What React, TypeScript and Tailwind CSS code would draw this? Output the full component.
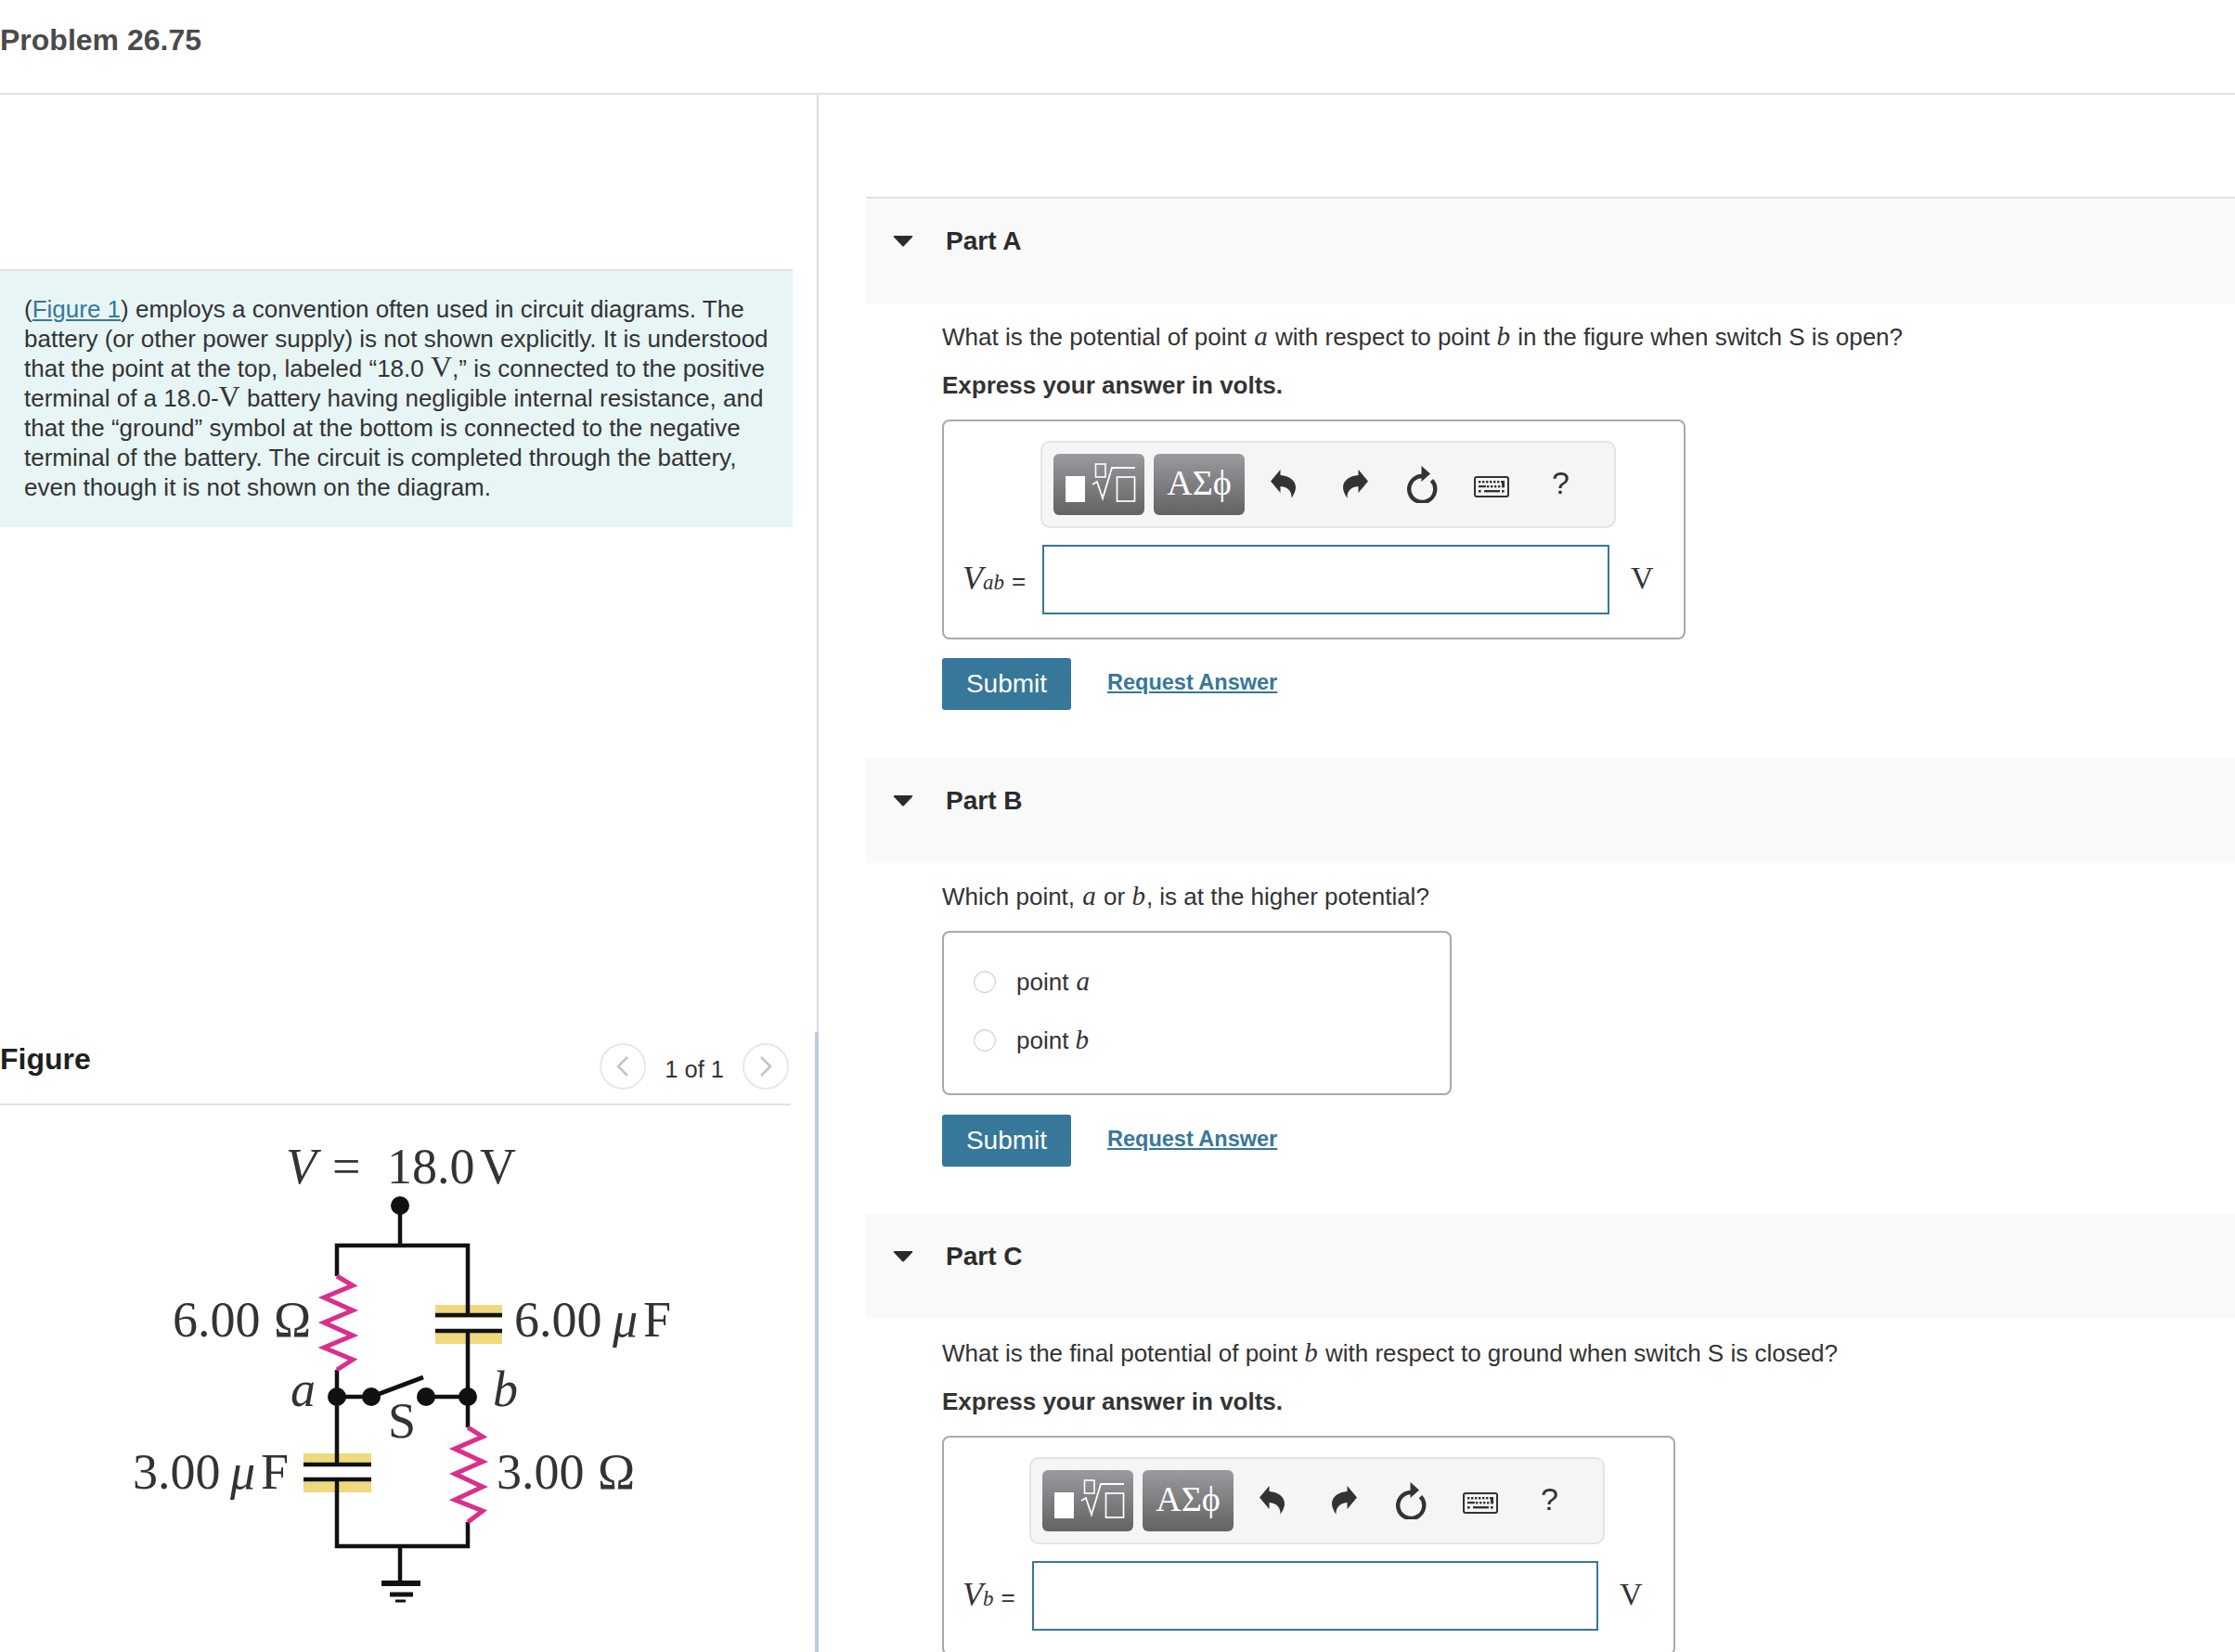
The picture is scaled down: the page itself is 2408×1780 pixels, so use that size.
import React from "react";

function M({ children }: { children: string }) {
  return (
    <i className={"[font-family:'Liberation_Serif',serif] text-[29px] leading-[0] " + (children === "a" ? "px-[1px]" : "pr-[1px]")}>
      {children}
    </i>
  );
}
function U({ children }: { children: React.ReactNode }) {
  return <span className="[font-family:'Liberation_Serif',serif] text-[32px] leading-[0]">{children}</span>;
}

function Undo({ flip }: { flip?: boolean }) {
  return (
    <svg viewBox="0 0 28 32" className={"w-[28px] h-[32px] " + (flip ? "-scale-x-100" : "")}>
      <path d="M0 12.5 L10.5 0 L10.5 6 C20 6.5 27 12 27 19 C27 24 24 28 22.5 31 C23 25 20 18.5 10.5 18 L10.5 25 Z" fill="#333" />
    </svg>
  );
}
function Reset() {
  return (
    <svg viewBox="0 0 34 40" className="w-[34px] h-[40px]" fill="none">
      <path d="M26.5 13.5 A14 14 0 1 1 16 9" stroke="#333" strokeWidth="4.4" transform="translate(0 2)" />
      <path d="M15.5 0 L25 8.5 L15.5 17 Z" fill="#333" />
    </svg>
  );
}
function Keyboard() {
  const top = [0, 1, 2, 3, 4, 5, 6];
  const mid = [3, 4, 5, 6];
  return (
    <svg viewBox="0 0 38 23" className="w-[38px] h-[23px]" fill="#333">
      <rect x="1" y="1" width="36" height="21" rx="2" fill="#f6f6f6" stroke="#333" strokeWidth="2" />
      {top.map((c) => (
        <rect key={c} x={5 + c * 4} y="5" width="2.4" height="2.4" />
      ))}
      <rect x="5" y="10" width="8" height="2.2" />
      {mid.map((c) => (
        <rect key={c} x={2 + c * 4} y="10" width="2.4" height="2.4" />
      ))}
      <rect x="30" y="5" width="3" height="7.4" />
      <rect x="5" y="15" width="2.6" height="2.6" />
      <rect x="11" y="15" width="17" height="2.4" />
      <rect x="30" y="15" width="2.6" height="2.6" />
    </svg>
  );
}
function SqrtIcon() {
  return (
    <svg viewBox="0 0 98 66" className="w-[98px] h-[66px]">
      <rect x="13" y="24" width="21" height="28" fill="#fff" />
      <rect x="45.5" y="11" width="10.5" height="14" fill="none" stroke="#fff" strokeWidth="1.6" />
      <path d="M42 33 L47 30 L53 48 L63 15 L88 15" fill="none" stroke="#fff" strokeWidth="1.8" />
      <rect x="68.5" y="25" width="19" height="26" fill="none" stroke="#fff" strokeWidth="1.7" />
    </svg>
  );
}

function Toolbar({ left }: { left: number }) {
  return (
    <div
      style={{ marginLeft: left }}
      className="w-[620px] h-[94px] rounded-[10px] border-2 border-[#e4e4e4] bg-[#f5f5f5] flex items-center pl-[12px]"
    >
      <div className="w-[98px] h-[66px] rounded-[6px] bg-gradient-to-b from-[#9b9aa0] to-[#636363]">
        <SqrtIcon />
      </div>
      <div className="ml-[10px] w-[98px] h-[66px] rounded-[6px] bg-gradient-to-b from-[#9b9aa0] to-[#636363] flex items-center justify-center text-white text-[38px] [font-family:'Liberation_Serif',serif] pb-[4px]">
        ΑΣϕ
      </div>
      <div className="ml-[28px]"><Undo /></div>
      <div className="ml-[49px]"><Undo flip /></div>
      <div className="ml-[42px]"><Reset /></div>
      <div className="ml-[38px] mt-[4px]"><Keyboard /></div>
      <div className="ml-[46px] text-[34px] text-[#333] leading-none [font-family:'Liberation_Sans',sans-serif] -mt-[4px]">?</div>
    </div>
  );
}

function AnswerBox({ label, sub, width, tb, inputW, inputL }: { label: string; sub: string; width: number; tb: number; inputW: number; inputL: number }) {
  return (
    <div style={{ width }} className="mt-[21px] rounded-[8px] border-2 border-[#a9a9a9] pt-[21px] h-[237px] shrink-0">
      <Toolbar left={tb} />
      <div className="mt-[18px] flex items-center h-[75px] relative">
        <div style={{ width: inputL }} className="pl-[20px] -mt-[3px] shrink-0 text-[#333] flex items-baseline">
          <i className="[font-family:'Liberation_Serif',serif] text-[36px] leading-none">{label}</i>
          <i className="[font-family:'Liberation_Serif',serif] text-[23px] leading-none">{sub}</i>
          <span className="ml-[8px] text-[26px] leading-none">=</span>
        </div>
        <div style={{ width: inputW }} className="h-[75px] border-2 border-[#37779a] bg-white shrink-0" />
        <div className="ml-[23px] [font-family:'Liberation_Serif',serif] text-[34px] text-[#333] leading-none -mt-[4px]">V</div>
      </div>
    </div>
  );
}

function Submit({ top }: { top: string }) {
  return (
    <div className={top + " flex items-start"}>
      <div className="w-[139px] h-[56px] rounded-[3px] bg-[#37779a] text-white text-[28px] flex items-center justify-center">Submit</div>
      <a className="ml-[39px] mt-[10px] text-[#37779a] text-[23.5px] leading-[32px] font-bold underline">Request Answer</a>
    </div>
  );
}

function PartHeader({ name, tall, border }: { name: string; tall: string; border?: boolean }) {
  return (
    <div className={tall + " bg-[#f9f9f9] flex items-start pt-[30px] " + (border ? "border-t-2 border-[#e2e2e2]" : "")}>
      <svg viewBox="0 0 22 12" className="ml-[29px] mt-[10px] w-[22px] h-[12px]">
        <path d="M1 1.5 Q0 0 2 0 L20 0 Q22 0 21 1.5 L12 11 Q11 12 10 11 Z" fill="#2b2b2b" />
      </svg>
      <span className="ml-[35px] text-[28px] leading-[32px] font-bold text-[#2b2b2b]">{name}</span>
    </div>
  );
}

function Circuit() {
  const wire = "#111";
  return (
    <svg viewBox="0 1193 854 588" className="w-[854px] h-[588px] blur-[0.6px]">
      <g fill="#efd97f">
        <rect x="469" y="1408" width="72" height="14" />
        <rect x="469" y="1436" width="72" height="14" />
        <rect x="327" y="1568" width="73" height="13" />
        <rect x="327" y="1596" width="73" height="14" />
      </g>
      <g fill="none" stroke={wire} strokeWidth="4.5">
        <path d="M431 1301 V1344 M363 1377 V1344 H504 V1419 M504 1436 V1540 M363 1478 V1580 M363 1596 V1668 H504 V1642 M431 1668 V1708" />
        <path d="M469 1419 H541 M469 1436 H541 M327 1580 H400 M327 1596 H400" />
        <path d="M363 1507 H400 M459 1507 H504" />
        <path d="M400 1507 L456 1486" strokeWidth="5" />
        <path d="M411 1708 H453" strokeWidth="6" />
        <path d="M420 1720 H445" strokeWidth="5" />
        <path d="M426 1727 H437" strokeWidth="3" />
      </g>
      <g fill="none" stroke="#d8308c" strokeWidth="5">
        <polyline points="363,1377 380,1387 349,1400 380,1414 349,1427 380,1441 349,1454 380,1467 363,1478" />
        <polyline points="504,1540 520,1550 490,1563 520,1577 490,1590 520,1604 490,1618 520,1630 504,1642" />
      </g>
      <g fill={wire}>
        <ellipse cx="431" cy="1301" rx="10" ry="10" />
        <circle cx="363" cy="1507" r="10" />
        <circle cx="400" cy="1507" r="10" />
        <circle cx="459" cy="1507" r="10" />
        <circle cx="504" cy="1507" r="10" />
      </g>
      <g className="[font-family:'Liberation_Serif',serif]" fontSize="54" fill="#333">
        <text y="1277">
          <tspan x="308" fontStyle="italic">V</tspan>
          <tspan x="358">=</tspan>
          <tspan x="417">18.0</tspan>
          <tspan x="517">V</tspan>
        </text>
        <text y="1442">
          <tspan x="186">6.00</tspan>
          <tspan x="295">Ω</tspan>
        </text>
        <text y="1442">
          <tspan x="554">6.00</tspan>
          <tspan x="660" fontStyle="italic">μ</tspan>
          <tspan x="693">F</tspan>
        </text>
        <text x="313" y="1517" fontStyle="italic">a</text>
        <text x="531" y="1517" fontStyle="italic">b</text>
        <text x="418" y="1551">S</text>
        <text y="1606">
          <tspan x="143">3.00</tspan>
          <tspan x="248" fontStyle="italic">μ</tspan>
          <tspan x="281">F</tspan>
        </text>
        <text y="1606">
          <tspan x="535">3.00</tspan>
          <tspan x="644">Ω</tspan>
        </text>
      </g>
    </svg>
  );
}

function Pager() {
  return (
    <div className="flex items-center text-[#333]">
      <div className="w-[50px] h-[50px] rounded-full border-2 border-[#e8e8e8] flex items-center justify-center">
        <svg viewBox="0 0 14 24" className="w-[14px] h-[24px]"><path d="M12 2 L2 12 L12 22" fill="none" stroke="#c4c4c4" strokeWidth="2.6" /></svg>
      </div>
      <span className="ml-[20px] text-[25.5px] mt-[6px]">1 of 1</span>
      <div className="ml-[20px] w-[50px] h-[50px] rounded-full border-2 border-[#e8e8e8] flex items-center justify-center">
        <svg viewBox="0 0 14 24" className="w-[14px] h-[24px]"><path d="M2 2 L12 12 L2 22" fill="none" stroke="#c4c4c4" strokeWidth="2.6" /></svg>
      </div>
    </div>
  );
}

export default function App() {
  return (
    <div className="w-[2408px] h-[1780px] overflow-hidden bg-white text-[#333] [font-family:'Liberation_Sans',Arial,sans-serif] text-[26px] leading-[32px]">
      <header className="h-[102px] border-b-2 border-[#e2e2e2] pt-[25px]">
        <h1 className="text-[32px] leading-[36px] font-bold text-[#4a4a4a]">Problem 26.75</h1>
      </header>
      <div className="flex h-[1678px]">
        <aside className="w-[882px] shrink-0 border-r-2 border-[#dcdcdc] relative pt-[188px]">
          <div className="w-[854px] h-[278px] bg-[#e7f5f5] border-t-2 border-[#e0e0e0] pl-[26px] pt-[25px]">
            (<a className="text-[#37779a] underline">Figure 1</a>) employs a convention often used in circuit diagrams. The<br />
            battery (or other power supply) is not shown explicitly. It is understood<br />
            that the point at the top, labeled “18.0 <U>V</U>,” is connected to the positive<br />
            terminal of a 18.0-<U>V</U> battery having negligible internal resistance, and<br />
            that the “ground” symbol at the bottom is connected to the negative<br />
            terminal of the battery. The circuit is completed through the battery,<br />
            even though it is not shown on the diagram.
          </div>
          <div className="mt-[554px] w-[852px] h-[50px] flex items-center justify-between">
            <h2 className="text-[32px] font-bold text-[#1f1f1f] -mt-[12px]">Figure</h2>
            <div className="mr-[2px] mt-[3px]"><Pager /></div>
          </div>
          <div className="mt-[17px] w-[852px] border-t-2 border-[#e2e2e2]" />
          <Circuit />
          <div className="absolute right-[-2px] top-[1010px] bottom-0 w-[4px] bg-[#bccddf]" />
        </aside>
        <main className="flex-1 pl-[51px] pt-[110px]">
          <PartHeader name="Part A" border tall="h-[115px]" />
          <div className="ml-[82px] flex flex-col items-start">
            <p className="mt-[20px]">What is the potential of point <M>a</M> with respect to point <M>b</M> in the figure when switch S is open?</p>
            <p className="mt-[20px] font-bold">Express your answer in volts.</p>
            <AnswerBox label="V" sub="ab" width={801} tb={104} inputL={106} inputW={611} />
            <Submit top="mt-[20px]" />
          </div>
          <div className="mt-[52px]"><PartHeader name="Part B" tall="h-[113px]" /></div>
          <div className="ml-[82px] flex flex-col items-start">
            <p className="mt-[20px]">Which point, <M>a</M> or <M>b</M>, is at the higher potential?</p>
            <div className="mt-[21px] w-[549px] h-[177px] rounded-[8px] border-2 border-[#a9a9a9] pl-[32px] pt-[40px] flex flex-col gap-[37px]">
              {["a", "b"].map((p) => (
                <div key={p} className="flex items-center h-[26px]">
                  <span className="w-[24px] h-[24px] rounded-full border border-[#c8c8c8] bg-white shadow-[inset_0_1px_2px_rgba(0,0,0,0.08)]" />
                  <span className="ml-[22px]">point <M>{p}</M></span>
                </div>
              ))}
            </div>
            <Submit top="mt-[21px]" />
          </div>
          <div className="mt-[51px]"><PartHeader name="Part C" tall="h-[113px]" /></div>
          <div className="ml-[82px] flex flex-col items-start">
            <p className="mt-[21px]">What is the final potential of point <M>b</M> with respect to ground when switch S is closed?</p>
            <p className="mt-[20px] font-bold">Express your answer in volts.</p>
            <AnswerBox label="V" sub="b" width={790} tb={92} inputL={95} inputW={610} />
          </div>
        </main>
      </div>
    </div>
  );
}
